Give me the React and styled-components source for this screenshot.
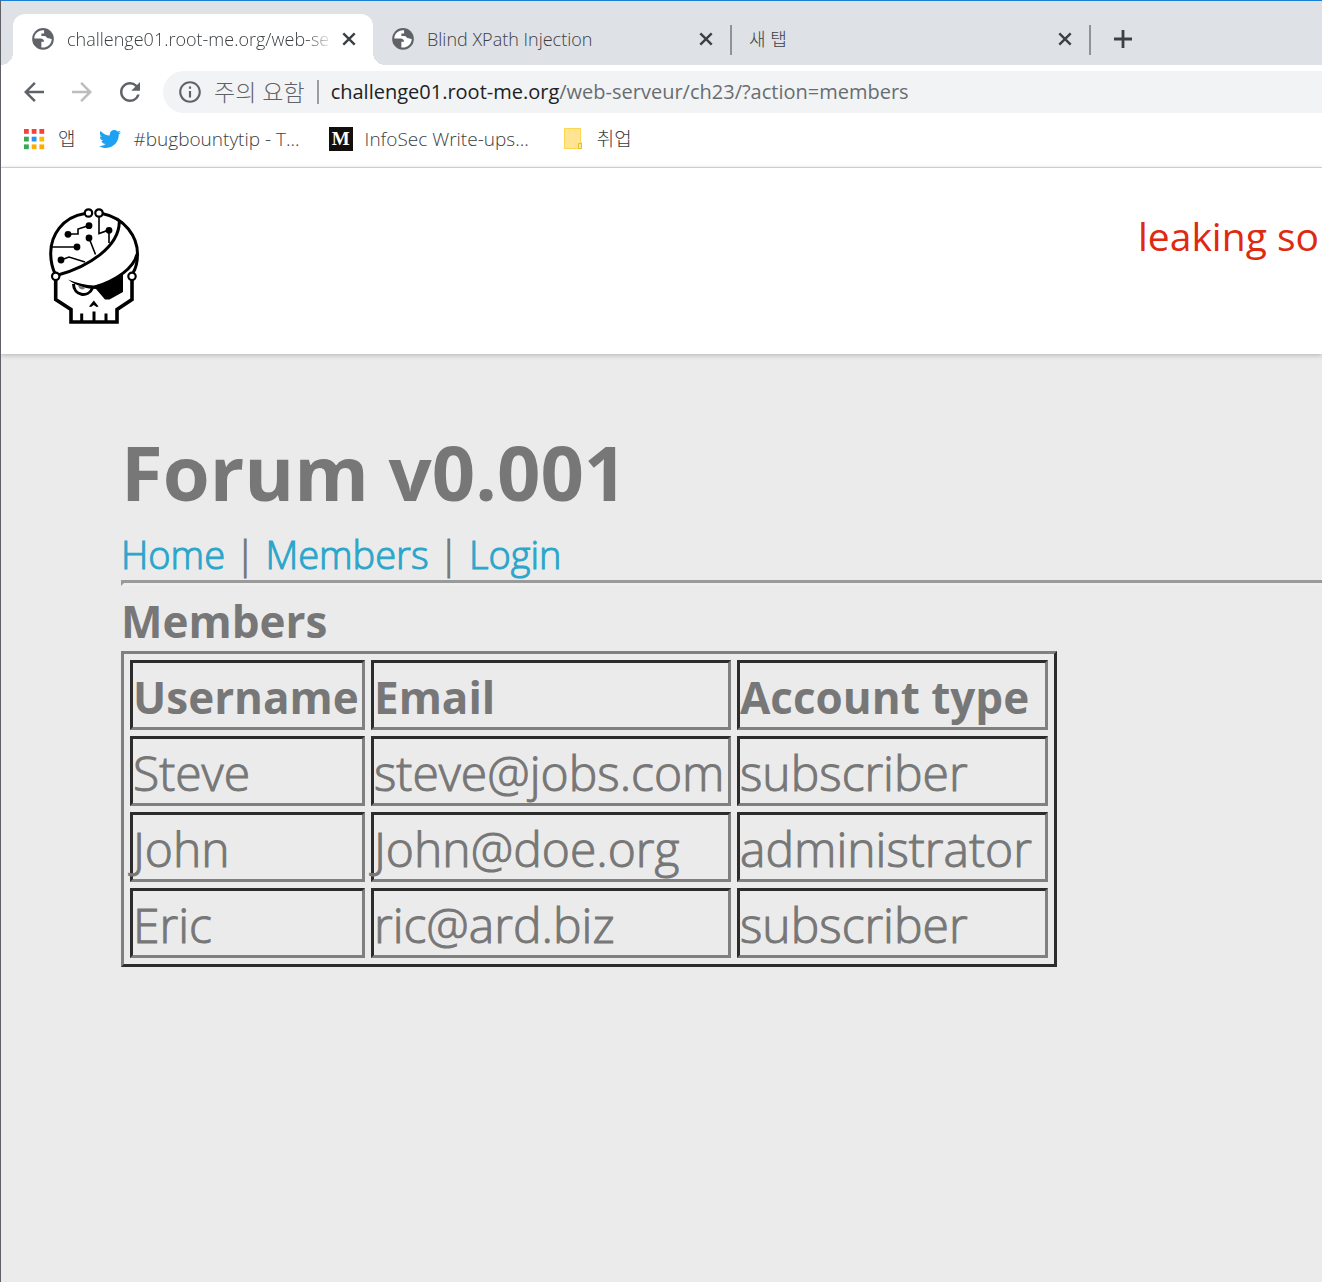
import React from "react";
import styled, { createGlobalStyle } from "styled-components";
import { MdArrowBack, MdArrowForward, MdRefresh, MdInfoOutline } from "react-icons/md";
import { FaTwitter } from "react-icons/fa";

const GlobalStyle = createGlobalStyle`
  * {
    box-sizing: border-box;
  }
  body {
    margin: 0;
    background: #ebebeb;
    font-family: "Open Sans", "Noto Sans CJK KR", sans-serif;
  }
  button {
    display: flex;
    align-items: center;
    justify-content: center;
    padding: 0;
    border: 0;
    background: none;
    color: inherit;
    font: inherit;
  }
`;

const Window = styled.div`
  min-height: 100vh;
  border-top: 1px solid #1a7fd4;
  border-left: 1px solid #5f6066;
  overflow: hidden;
`;

const TabStrip = styled.div`
  display: flex;
  align-items: flex-end;
  height: 64px;
  padding-left: 12px;
  background: #dee1e6;
`;

const Tab = styled.div`
  position: relative;
  display: flex;
  align-items: center;
  flex: 0 1 ${(props) => (props.$active ? "360px" : "357px")};
  min-width: 0;
  height: 51px;
  padding: 0 10px 0 17px;
  border-radius: 12px 12px 0 0;
  background: ${(props) => (props.$active ? "#fff" : "transparent")};
  color: #5f6368;

  &::before,
  &::after {
    content: ${(props) => (props.$active ? '""' : "none")};
    position: absolute;
    bottom: 0;
    width: 12px;
    height: 12px;
  }
  &::before {
    right: 100%;
    background: radial-gradient(circle at 0 0, transparent 12px, #fff 12px);
  }
  &::after {
    left: 100%;
    background: radial-gradient(circle at 100% 0, transparent 12px, #fff 12px);
  }
`;

const TabTitle = styled.span`
  flex: 1;
  min-width: 0;
  margin: 0 2px 0 ${(props) => (props.$plain ? 0 : 11)}px;
  padding-bottom: 2px;
  white-space: nowrap;
  font-size: 18px;
  line-height: 24px;
  font-weight: 300;
  color: #3c4043;
  ${(props) => props.$fade && "mask-image: linear-gradient(to right, #000 90%, transparent);"}
`;

const CloseButton = styled.button`
  width: 28px;
  height: 28px;
  padding-bottom: 2px;
  color: #3c4043;
`;

const Separator = styled.span`
  align-self: center;
  width: 2px;
  height: 30px;
  margin-top: 14px;
  background: #8f9297;
`;

const NewTab = styled.button`
  width: 28px;
  height: 53px;
  margin-left: 18px;
  color: #3c4043;
`;

const Toolbar = styled.div`
  display: flex;
  align-items: center;
  height: 53px;
  padding-left: 18px;
  background: #fff;
`;

const NavButton = styled.button`
  width: 30px;
  height: 30px;
  margin-right: 18px;
  color: ${(props) => (props.disabled ? "#bbbdbf" : "#5f6368")};
`;

const AddressBar = styled.div`
  display: flex;
  align-items: center;
  flex: 1;
  height: 42px;
  padding-left: 14px;
  border-radius: 21px 0 0 21px;
  background: #f1f3f4;
  color: #5f6368;
  font-size: 20px;
  line-height: 28px;
  white-space: nowrap;
`;

const Warning = styled.span`
  margin-left: 11px;
  padding-right: 12px;
  border-right: 2px solid #9a9da1;
  line-height: 24px;
  font-size: 23px;
  font-weight: 300;
`;

const Url = styled.span`
  margin-left: 12px;
  color: #6a6d70;

  b {
    font-weight: 400;
    color: #202124;
  }
`;

const Bookmarks = styled.nav`
  display: flex;
  align-items: center;
  height: 50px;
  padding: 0 0 8px 21px;
  border-bottom: 1px solid #dadce0;
  background: #fff;
`;

const Bookmark = styled.a`
  display: flex;
  align-items: center;
  gap: 12px;
  margin-right: ${(props) => props.$gap || 24}px;
  color: #3c4043;
  font-size: 19px;
  line-height: 24px;
  font-weight: 300;
  text-decoration: none;
  white-space: nowrap;
`;

const MediumBadge = styled.span`
  width: 24px;
  height: 24px;
  background: #12100e;
  color: #fff;
  font: bold 19px/24px "Liberation Serif", serif;
  text-align: center;
`;

const SiteHeader = styled.header`
  position: relative;
  display: flex;
  justify-content: space-between;
  height: 186px;
  padding: 38px 3px 0 44px;
  background: #fff;
  box-shadow: 0 1px 5px rgba(0, 0, 0, 0.25);
`;

const Notice = styled.p`
  margin: 4px 0 0;
  color: #de2a10;
  font-size: 39px;
  line-height: 52px;
  white-space: nowrap;
`;

const Content = styled.main`
  padding: 76px 0 0 120px;
  color: #777;
`;

const Title = styled.h1`
  margin: 0;
  font-size: 76px;
  line-height: 84px;
`;

const Links = styled.nav`
  padding-top: 14px;
  font-size: 38px;
  line-height: 52px;
  font-weight: 300;
  -webkit-text-stroke: 1px;

  a {
    color: #2ba6cb;
    text-decoration: none;
  }
`;

const Rule = styled.hr`
  height: 6px;
  margin: 0;
  border: 3px solid;
  border-color: #9a9a9a #eee #eee #9a9a9a;
  border-right: 0;
`;

const Subtitle = styled.h2`
  margin: 0;
  padding-top: 5px;
  font-size: 44px;
  line-height: 60px;
`;

const MemberTable = styled.table`
  border: 3px solid;
  border-color: #808080 #2c2c2c #2c2c2c #808080;
  border-spacing: 6px;
  font-size: 48px;
  line-height: 60px;

  th,
  td {
    padding: 4px 0 0;
    border: 3px solid;
    border-color: #2c2c2c #808080 #808080 #2c2c2c;
    text-align: left;
    white-space: nowrap;
  }
  th {
    font-size: 44px;
    font-weight: 700;
  }
  td {
    font-weight: 300;
    -webkit-text-stroke: 1px;
  }
`;

const Column = styled.col`
  width: ${(props) => props.$width}px;
`;

const GlobeIcon = () => (
  <svg width="26" height="26" viewBox="0 0 24 24" aria-hidden="true">
    <circle cx="12" cy="11" r="10" fill="#5f6368" />
    <path
      d="M13 3C8 2.400 4 6 4 10.500h5.500c2 0 3.500 1 3.500 3h-2.500v5.400c5 .6 9.500-3 9.500-7.900l-4-.8-2-2h-3.500V6H13z"
      fill="#fff"
    />
  </svg>
);

const CloseIcon = () => (
  <svg width="14" height="14" viewBox="0 0 14 14" stroke="currentColor" strokeWidth="2.400" aria-hidden="true">
    <path d="M1.300 1.300l11.400 11.400M12.700 1.300L1.300 12.700" />
  </svg>
);

const PlusIcon = () => (
  <svg width="18" height="18" viewBox="0 0 18 18" stroke="currentColor" strokeWidth="2.800" aria-hidden="true">
    <path d="M9 0v18M0 9h18" />
  </svg>
);

const AppsIcon = () => {
  const colors = ["#f44336", "#f44336", "#f44336", "#34a853", "#2196f3", "#fbbc05", "#34a853", "#fbac05", "#fbac05"];
  return (
    <svg width="24" height="24" viewBox="0 0 24 24" aria-hidden="true">
      {colors.map((color, i) => (
        <rect key={i} x={2 + (i % 3) * 7.7} y={2 + Math.floor(i / 3) * 7.7} width="4.8" height="4.8" fill={color} />
      ))}
    </svg>
  );
};

const FolderIcon = () => (
  <svg width="22" height="24" viewBox="2 0 22 24" aria-hidden="true">
    <path d="M3.500 1.500h16v14h1v6h-17z" fill="#ffe592" stroke="#fbd64e" />
    <path d="M17.500 21.500v-5h3v5z" fill="#ffe592" stroke="#e8bd2f" />
  </svg>
);

const SkullLogo = () => (
  <svg width="98" height="122" viewBox="0 0 98 122" fill="none" stroke="#000" aria-label="Root Me" role="img">
    <g strokeWidth="3">
      <path d="M40 7.500C17 11 5.700 30 5.700 47c0 8 1.500 15 4.500 21" />
      <path d="M57 7.500C80 12 92.500 31 92.500 48c0 8-1.500 14-4.500 19" />
      <path d="M13 69C43 61 74 41 74.300 16" />
      <path d="M92 48C89 62 72 74 50 81" />
      <path d="M10.700 74v19.500L26 103.500V116h46v-12.500L87 93.500V74" strokeWidth="3.6" />
      <path d="M36.700 116v-8.500M49 116v-10.500M61 116v-8.500" />
      <path d="M28.500 78c0 12 15 14 19 4" />
    </g>
    <path d="M23 73.500c9 4 18 5.500 26 6 11-2 21-6 29-11V86l-13.500 7.500H60L51 83c-9 0-20-3-28-9.500z" fill="#000" stroke="none" />
    <path d="M33 79.500l8 2-3 2c-2 0-4-1-5-4z" fill="#777" stroke="none" />
    <path d="M44 100.500l4.800-6 4.800 6-2 .5-2.800-2-2.800 2z" fill="#000" stroke="none" />
    <g strokeWidth="1.6">
      <path d="M23 28h10v-5l11-3.500M7 41h25M16 54l8-3 16 5M44 32l6.500 16.500M54 9v18.500L64 24v13" />
    </g>
    <g fill="#000" stroke="none">
      <circle cx="23" cy="28.300" r="3.400" />
      <circle cx="44" cy="19.700" r="3.400" />
      <circle cx="32" cy="41" r="3.400" />
      <circle cx="44" cy="32" r="3.400" />
      <circle cx="16" cy="54" r="3.400" />
      <circle cx="64" cy="24.300" r="3.400" />
    </g>
    <g fill="#fff" strokeWidth="2.200">
      <circle cx="43.500" cy="7" r="3.700" />
      <circle cx="54" cy="7" r="3.700" />
      <circle cx="10.700" cy="70.300" r="3.700" />
      <circle cx="87" cy="70.300" r="3.700" />
    </g>
  </svg>
);

const members = [
  { username: "Steve", email: "steve@jobs.com", type: "subscriber" },
  { username: "John", email: "John@doe.org", type: "administrator" },
  { username: "Eric", email: "ric@ard.biz", type: "subscriber" },
];

const App = () => {
  return (
    <Window>
      <GlobalStyle />
      <TabStrip>
        <Tab $active>
          <GlobeIcon />
          <TabTitle $fade>challenge01.root-me.org/web-se</TabTitle>
          <CloseButton aria-label="Close tab"><CloseIcon /></CloseButton>
        </Tab>
        <Tab>
          <GlobeIcon />
          <TabTitle>Blind XPath Injection</TabTitle>
          <CloseButton aria-label="Close tab"><CloseIcon /></CloseButton>
        </Tab>
        <Separator />
        <Tab>
          <TabTitle $plain>새 탭</TabTitle>
          <CloseButton aria-label="Close tab"><CloseIcon /></CloseButton>
        </Tab>
        <Separator />
        <NewTab aria-label="New tab"><PlusIcon /></NewTab>
      </TabStrip>

      <Toolbar>
        <NavButton aria-label="Back"><MdArrowBack size={30} /></NavButton>
        <NavButton aria-label="Forward" disabled><MdArrowForward size={30} /></NavButton>
        <NavButton aria-label="Reload"><MdRefresh size={30} /></NavButton>
        <AddressBar>
          <MdInfoOutline size={26} />
          <Warning>주의 요함</Warning>
          <Url><b>challenge01.root-me.org</b>/web-serveur/ch23/?action=members</Url>
        </AddressBar>
      </Toolbar>

      <Bookmarks>
        <Bookmark href="#apps"><AppsIcon />앱</Bookmark>
        <Bookmark href="#twitter" $gap={29}><FaTwitter size={22} color="#1da1f2" />#bugbountytip - T...</Bookmark>
        <Bookmark href="#medium" $gap={34}><MediumBadge>M</MediumBadge>InfoSec Write-ups...</Bookmark>
        <Bookmark href="#jobs"><FolderIcon />취업</Bookmark>
      </Bookmarks>

      <SiteHeader>
        <SkullLogo />
        <Notice>leaking so</Notice>
      </SiteHeader>

      <Content>
        <Title>Forum v0.001</Title>
        <Links>
          <a href="#home">Home</a> | <a href="#members">Members</a> | <a href="#login">Login</a>
        </Links>
        <Rule />
        <Subtitle>Members</Subtitle>
        <MemberTable>
          <colgroup>
            <Column $width={235} />
            <Column $width={360} />
            <Column $width={311} />
          </colgroup>
          <thead>
            <tr>
              <th>Username</th>
              <th>Email</th>
              <th>Account type</th>
            </tr>
          </thead>
          <tbody>
            {members.map((member) => (
              <tr key={member.username}>
                <td>{member.username}</td>
                <td>{member.email}</td>
                <td>{member.type}</td>
              </tr>
            ))}
          </tbody>
        </MemberTable>
      </Content>
    </Window>
  );
};

export default App;
